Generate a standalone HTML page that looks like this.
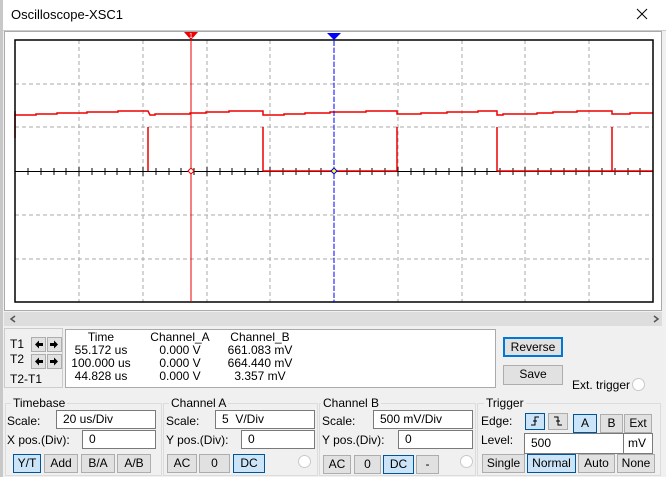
<!DOCTYPE html>
<html><head><style>
*{box-sizing:border-box;margin:0;padding:0}
body{width:666px;height:477px;overflow:hidden;background:#f0f0f0;font-family:"Liberation Sans",sans-serif;font-size:12px;color:#000;position:relative}
.a{position:absolute;white-space:nowrap}
.btn{position:absolute;background:#e1e1e1;border:1px solid #adadad;text-align:center;font-size:12px;line-height:17px;height:19px}
.sel{background:#cce4f7;border-color:#005499}
.inp{position:absolute;background:#fff;border:1px solid #7a7a7a;height:19px;font-size:12px;line-height:17px;padding-left:6px}
.grp{position:absolute;border:1px solid #dcdcdc}
.gt{position:absolute;background:#f0f0f0;padding:0 2px;font-size:12px}
.radio{position:absolute;width:13px;height:13px;border-radius:50%;border:1px solid #c9c9c9;background:#fff}
</style></head><body>
<div class="a" style="left:0;top:0;width:666px;height:30px;background:#fff"></div>
<div class="a" style="left:0;top:0;width:3px;height:477px;background:#c8c8c8"></div>
<div class="a" style="left:11px;top:7px;font-size:13px">Oscilloscope-XSC1</div>
<svg class="a" style="left:636px;top:8px" width="12" height="12"><path d="M1 1L11 11M11 1L1 11" stroke="#000" stroke-width="1"/></svg>
<div class="a" style="left:3px;top:30px;width:663px;height:1px;background:#ccc"></div>
<div class="a" style="left:4px;top:31px;width:658px;height:280px;background:#fff;border:1px solid #aaa"></div>
<svg class="a" style="left:0;top:0" width="666" height="320">
<g stroke="#aaa" stroke-dasharray="4,3" stroke-width="1">
<line x1="79" y1="40" x2="79" y2="302"/><line x1="143" y1="40" x2="143" y2="302"/><line x1="207" y1="40" x2="207" y2="302"/><line x1="270" y1="40" x2="270" y2="302"/><line x1="334" y1="40" x2="334" y2="302"/><line x1="398" y1="40" x2="398" y2="302"/><line x1="462" y1="40" x2="462" y2="302"/><line x1="525" y1="40" x2="525" y2="302"/><line x1="589" y1="40" x2="589" y2="302"/>
<line x1="15" y1="84" x2="653" y2="84"/><line x1="15" y1="127" x2="653" y2="127"/><line x1="15" y1="215" x2="653" y2="215"/><line x1="15" y1="259" x2="653" y2="259"/>
</g>
<line x1="15" y1="171.5" x2="653" y2="171.5" stroke="#000"/>
<g stroke="#000">
<path d="M28 168v7M41 168v7M54 168v7M66 168v7M79 167v9M92 168v7M105 168v7M117 168v7M130 168v7M143 167v9M156 168v7M169 168v7M181 168v7M194 168v7M207 167v9M220 168v7M232 168v7M245 168v7M258 168v7M270 167v9M283 168v7M296 168v7M309 168v7M321 168v7M347 168v7M360 168v7M372 168v7M385 168v7M398 167v9M411 168v7M424 168v7M436 168v7M449 168v7M462 167v9M475 168v7M487 168v7M500 168v7M513 168v7M525 167v9M538 168v7M551 168v7M564 168v7M576 168v7M589 167v9M602 168v7M615 168v7M628 168v7M640 168v7"/>
</g>
<g stroke="#e00" stroke-width="1.5" fill="none">
<path d="M15 115H36V114H57V113H87V112H118V111H148L150 115H155V114H190V113H206V112H229V111H263V115H284V114H305V113H330V112H366V111H397V114H421V113H447V112H478V111H497V115H503V114H537V113H553V112H577V111H612V114H630V113H653"/>
<path d="M15 111V138M148 127V171M263 127V171M397 127V171M497 127V171M612 127V171"/>
<path d="M263 171H397M497 171H653"/>
</g>
<rect x="15" y="40" width="638" height="262" fill="none" stroke="#000" stroke-width="1.5"/>
<line x1="191" y1="34" x2="191" y2="302" stroke="#e00"/>
<line x1="334" y1="34" x2="334" y2="302" stroke="#00f" stroke-dasharray="5,2"/>
<path d="M184 32h14l-7 8z" fill="#e00"/><text x="189" y="38" font-size="7" fill="#fff" font-family="Liberation Sans">1</text>
<path d="M327 33h14l-7 7z" fill="#00f"/>
<path d="M188 171l3-3 3 3-3 3z" fill="#fff" stroke="#e00"/>
<path d="M331 171l3-3 3 3-3 3z" fill="#ff0" stroke="#00f"/>
</svg>
<div class="a" style="left:4px;top:312px;width:658px;height:14px;background:#ddd"></div>
<svg class="a" style="left:9px;top:315px" width="8" height="8"><path d="M6 1L2 4L6 7" stroke="#555" stroke-width="1.5" fill="none"/></svg>
<svg class="a" style="left:652px;top:315px" width="8" height="8"><path d="M2 1L6 4L2 7" stroke="#555" stroke-width="1.5" fill="none"/></svg>
<div class="a" style="left:4px;top:328px;width:59px;height:60px;border:1px solid #ccc"></div>
<div class="a" style="left:10px;top:337px">T1</div>
<div class="a" style="left:10px;top:352px">T2</div>
<div class="a" style="left:10px;top:372px">T2-T1</div>
<div class="btn" style="left:31px;top:337px;width:15px;height:15px"></div>
<div class="btn" style="left:47px;top:337px;width:15px;height:15px"></div>
<div class="btn" style="left:31px;top:354px;width:15px;height:15px"></div>
<div class="btn" style="left:47px;top:354px;width:15px;height:15px"></div>
<svg class="a" style="left:31px;top:337px" width="32" height="33">
<path d="M4 7.5L8 3.5V6H12V9H8V11.5Z M27 7.5L23 3.5V6H19V9H23V11.5Z M4 24.5L8 20.5V23H12V26H8V28.5Z M27 24.5L23 20.5V23H19V26H23V28.5Z" fill="#000"/>
</svg>
<div class="a" style="left:65px;top:329px;width:431px;height:59px;background:#fff;border:1px solid #aaa"></div>
<div class="a" style="left:66px;top:331px;width:70px;text-align:center;line-height:13px">Time<br>55.172 us<br>100.000 us<br>44.828 us</div>
<div class="a" style="left:148px;top:331px;width:64px;text-align:center;line-height:13px">Channel_A<br>0.000 V<br>0.000 V<br>0.000 V</div>
<div class="a" style="left:222px;top:331px;width:76px;text-align:center;line-height:13px">Channel_B<br>661.083 mV<br>664.440 mV<br>3.357 mV</div>
<div class="btn" style="left:503px;top:337px;width:60px;height:20px;border:2px solid #0078d7">Reverse</div>
<div class="btn" style="left:503px;top:365px;width:60px;height:20px">Save</div>
<div class="a" style="left:572px;top:378px">Ext. trigger</div>
<div class="radio" style="left:632px;top:378px"></div>

<div class="grp" style="left:5px;top:403px;width:157px;height:73px"></div><div class="gt" style="left:11px;top:396px">Timebase</div>
<div class="a" style="left:7px;top:414px">Scale:</div><div class="inp" style="left:56px;top:410px;width:100px">20 us/Div</div>
<div class="a" style="left:7px;top:433px">X pos.(Div):</div><div class="inp" style="left:82px;top:430px;width:74px">0</div>
<div class="btn sel" style="left:13px;top:454px;width:28px">Y/T</div><div class="btn" style="left:44px;top:454px;width:34px">Add</div><div class="btn" style="left:81px;top:454px;width:34px">B/A</div><div class="btn" style="left:117px;top:454px;width:34px">A/B</div>

<div class="grp" style="left:163px;top:403px;width:155px;height:73px"></div><div class="gt" style="left:169px;top:396px">Channel A</div>
<div class="a" style="left:166px;top:414px">Scale:</div><div class="inp" style="left:215px;top:410px;width:100px">5&nbsp; V/Div</div>
<div class="a" style="left:166px;top:433px">Y pos.(Div):</div><div class="inp" style="left:241px;top:430px;width:74px">0</div>
<div class="btn" style="left:167px;top:454px;width:30px">AC</div><div class="btn" style="left:199px;top:454px;width:31px">0</div><div class="btn sel" style="left:233px;top:454px;width:32px">DC</div>
<div class="radio" style="left:298px;top:455px"></div>

<div class="grp" style="left:319px;top:403px;width:157px;height:73px"></div><div class="gt" style="left:321px;top:396px">Channel B</div>
<div class="a" style="left:322px;top:414px">Scale:</div><div class="inp" style="left:373px;top:410px;width:100px">500 mV/Div</div>
<div class="a" style="left:322px;top:433px">Y pos.(Div):</div><div class="inp" style="left:398px;top:430px;width:75px">0</div>
<div class="btn" style="left:323px;top:455px;width:28px">AC</div><div class="btn" style="left:354px;top:455px;width:27px">0</div><div class="btn sel" style="left:383px;top:455px;width:31px">DC</div><div class="btn" style="left:416px;top:455px;width:23px">-</div>
<div class="radio" style="left:460px;top:455px"></div>

<div class="grp" style="left:477px;top:403px;width:184px;height:73px"></div><div class="gt" style="left:484px;top:396px">Trigger</div>
<div class="a" style="left:481px;top:414px">Edge:</div>
<div class="btn sel" style="left:525px;top:413px;width:20px;height:17px"></div><div class="btn" style="left:548px;top:413px;width:20px;height:17px"></div>
<svg class="a" style="left:525px;top:413px" width="44" height="17">
<path d="M6 12H10V4H14M8 8H12" stroke="#000" fill="none"/>
<path d="M29 4H33V12H37M31 8H35" stroke="#000" fill="none"/>
</svg>
<div class="btn sel" style="left:573px;top:414px;width:24px">A</div><div class="btn" style="left:600px;top:414px;width:23px">B</div><div class="btn" style="left:624px;top:414px;width:28px">Ext</div>
<div class="a" style="left:481px;top:433px">Level:</div>
<div class="inp" style="left:524px;top:433px;width:100px;height:21px;line-height:19px">500</div><div class="inp" style="left:623px;top:433px;width:30px;height:21px;line-height:19px;padding-left:4px">mV</div>
<div class="btn" style="left:482px;top:454px;width:43px">Single</div><div class="btn sel" style="left:527px;top:454px;width:49px">Normal</div><div class="btn" style="left:578px;top:454px;width:37px">Auto</div><div class="btn" style="left:617px;top:454px;width:38px">None</div>
</body></html>
